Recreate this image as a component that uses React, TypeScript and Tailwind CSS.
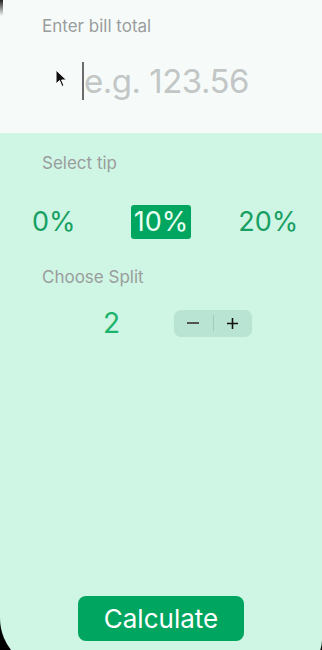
import React from "react";

export default function App() {
  const font = { fontFamily: "Inter, 'Noto Sans', sans-serif" };
  return (
    <div className="w-[322px] h-[650px] bg-black relative overflow-hidden" style={font}>
      <div className="h-[670px] w-full rounded-bl-[52px] rounded-br-[30px] overflow-hidden flex flex-col bg-[#cff5e5]">
        <div className="h-[133px] bg-[#f6fbfa] flex flex-col px-[42px] pt-[15px]">
          <div className="text-[17px] leading-[22px] text-[#9a9d9c]">Enter bill total</div>
          <div className="flex items-center mt-[24px] pl-[40px] h-[40px]">
            <div className="w-[2px] h-[38px] bg-[#6b6b6b]" />
            <div className="text-[33px] leading-[40px] text-[#c2c6c5] tracking-[-0.5px]">e.g. 123.56</div>
          </div>
        </div>
        <div className="flex-1 flex flex-col">
          <div className="px-[42px] pt-[19px] text-[17px] leading-[22px] text-[#9a9d9c]">Select tip</div>
          <div className="grid grid-cols-3 mt-[31px] items-center">
            <div className="flex justify-center">
              <span className="text-[27px] leading-[34px] text-[#17a062] px-[3px]">0%</span>
            </div>
            <div className="flex justify-center">
              <span className="text-[27px] leading-[34px] text-[#eafff3] bg-[#00a65f] rounded-[3px] px-[3px]">10%</span>
            </div>
            <div className="flex justify-center">
              <span className="text-[27px] leading-[34px] text-[#17a062] px-[3px]">20%</span>
            </div>
          </div>
          <div className="px-[42px] mt-[27px] text-[17px] leading-[22px] text-[#9a9d9c]">Choose Split</div>
          <div className="flex items-center mt-[20px] pl-[103px]">
            <span className="text-[28px] leading-[30px] text-[#1cb36b]">2</span>
            <div className="ml-[54px] w-[78px] h-[27px] rounded-[7px] bg-[#b9e3d3] flex items-center">
              <div className="flex-1 flex justify-center">
                <div className="w-[12px] h-[1.5px] bg-[#555]" />
              </div>
              <div className="w-[1px] h-[16px] bg-[#a3cbbb]" />
              <div className="flex-1 flex justify-center">
                <svg width="13" height="13" viewBox="0 0 13 13">
                  <path d="M6.5 1v11M1 6.5h11" stroke="#111" strokeWidth="1.6" />
                </svg>
              </div>
            </div>
          </div>
          <div className="flex-1" />
          <div className="flex justify-center pb-[29px]">
            <button className="w-[166px] h-[45px] rounded-[8px] bg-[#00a65f] text-white text-[26px] leading-[45px]">
              Calculate
            </button>
          </div>
        </div>
      </div>
      <div className="absolute left-0 top-0 w-[3px] h-[16px] bg-gradient-to-b from-[#222] to-transparent" />
      <svg className="absolute left-[55px] top-[69px]" width="13" height="20" viewBox="0 0 13 20">
        <path d="M1 1 L1 15 L4.5 11.5 L7 17.5 L9 16.6 L6.6 11 L11.5 11 Z" fill="#111" stroke="#fff" strokeWidth="1" />
      </svg>
    </div>
  );
}
